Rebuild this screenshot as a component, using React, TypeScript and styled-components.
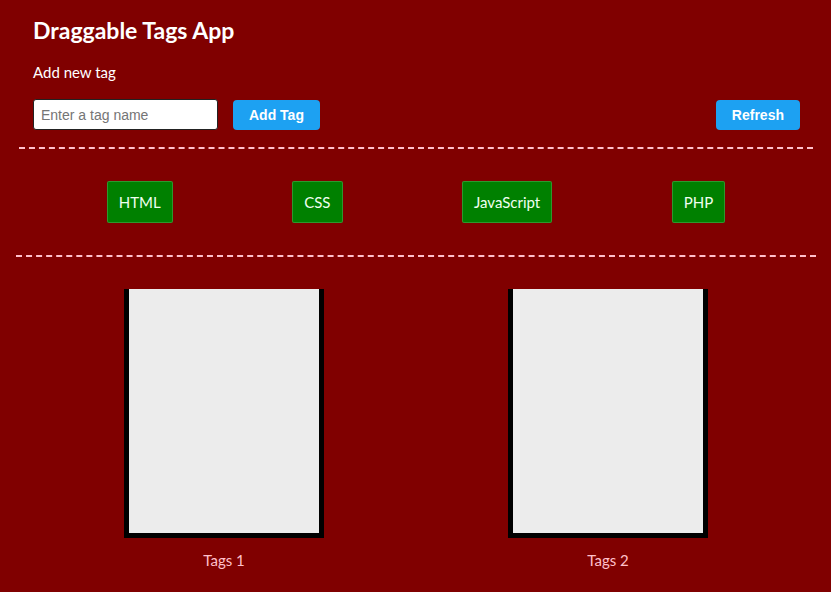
import React, { useState } from 'react'
import styled, { createGlobalStyle } from 'styled-components'

const GlobalStyle = createGlobalStyle`
  body {
    margin: 0;
    background: #800000;
    font-family: Lato, "Open Sans", sans-serif;
    color: #fff;
  }
`

const Page = styled.div`
  min-height: 592px;
  background: #800000;
`

const Header = styled.header`
  margin: 0 18px 0 19px;
  padding: 16px 13px 17px 14px;
  border-bottom: 2px dashed #ffc0cb;
`

const Title = styled.h1`
  margin: 0;
  font-size: 23px;
  font-weight: 700;
  line-height: 28px;
`

const Subtitle = styled.p`
  margin: 18px 0 0;
  font-size: 15px;
  line-height: 20px;
`

const Controls = styled.div`
  display: flex;
  align-items: center;
  gap: 15px;
  margin-top: 17px;
`

const TagInput = styled.input`
  box-sizing: border-box;
  width: 185px;
  height: 31px;
  padding: 0 7px;
  border: 1px solid #222;
  border-radius: 3px;
  font-family: Arial, "Liberation Sans", sans-serif;
  font-size: 14px;
  outline: none;

  &::placeholder {
    color: #757575;
  }
`

const Button = styled.button<{ $push?: boolean }>`
  height: 30px;
  padding: 0 16px;
  margin-left: ${(p) => (p.$push ? 'auto' : '0')};
  border: none;
  border-radius: 4px;
  background: #1da1f2;
  color: #fff;
  font-family: Arial, "Liberation Sans", sans-serif;
  font-size: 14px;
  font-weight: 700;
  cursor: pointer;
`

const TagRow = styled.div`
  display: flex;
  justify-content: space-around;
  align-items: center;
  margin: 0 15px 0 16px;
  padding: 32px 31px 32px;
  border-bottom: 2px dashed #ffc0cb;
`

const Tag = styled.div`
  display: flex;
  align-items: center;
  height: 42px;
  padding: 0 11px;
  box-sizing: border-box;
  background: #008000;
  border: 1px solid rgba(255, 255, 255, 0.18);
  border-radius: 2px;
  color: #f0fff0;
  font-size: 15px;
  cursor: grab;
`

const Boards = styled.div`
  display: flex;
  justify-content: space-around;
  margin: 32px 31px 0 32px;
`

const Board = styled.div`
  display: flex;
  flex-direction: column;
  align-items: center;
`

const DropZone = styled.div`
  width: 190px;
  height: 244px;
  background: #ececec;
  border: 5px solid #000;
  border-top: none;
`

const BoardLabel = styled.div`
  margin-top: 13px;
  font-size: 15px;
  color: #ffc0cb;
`

const initialTags = ['HTML', 'CSS', 'JavaScript', 'PHP']

export default function App() {
  const [tags, setTags] = useState(initialTags)
  const [name, setName] = useState('')

  const handleAdd = () => {
    if (name.trim() === '') {
      return
    }
    setTags([...tags, name.trim()])
    setName('')
  }

  return (
    <Page>
      <GlobalStyle />
      <Header>
        <Title>Draggable Tags App</Title>
        <Subtitle>Add new tag</Subtitle>
        <Controls>
          <TagInput
            placeholder="Enter a tag name"
            value={name}
            onChange={(e) => setName(e.target.value)}
          />
          <Button onClick={handleAdd}>Add Tag</Button>
          <Button $push onClick={() => setTags(initialTags)}>
            Refresh
          </Button>
        </Controls>
      </Header>
      <TagRow>
        {tags.map((tag) => (
          <Tag key={tag} draggable>
            {tag}
          </Tag>
        ))}
      </TagRow>
      <Boards>
        <Board>
          <DropZone />
          <BoardLabel>Tags 1</BoardLabel>
        </Board>
        <Board>
          <DropZone />
          <BoardLabel>Tags 2</BoardLabel>
        </Board>
      </Boards>
    </Page>
  )
}
